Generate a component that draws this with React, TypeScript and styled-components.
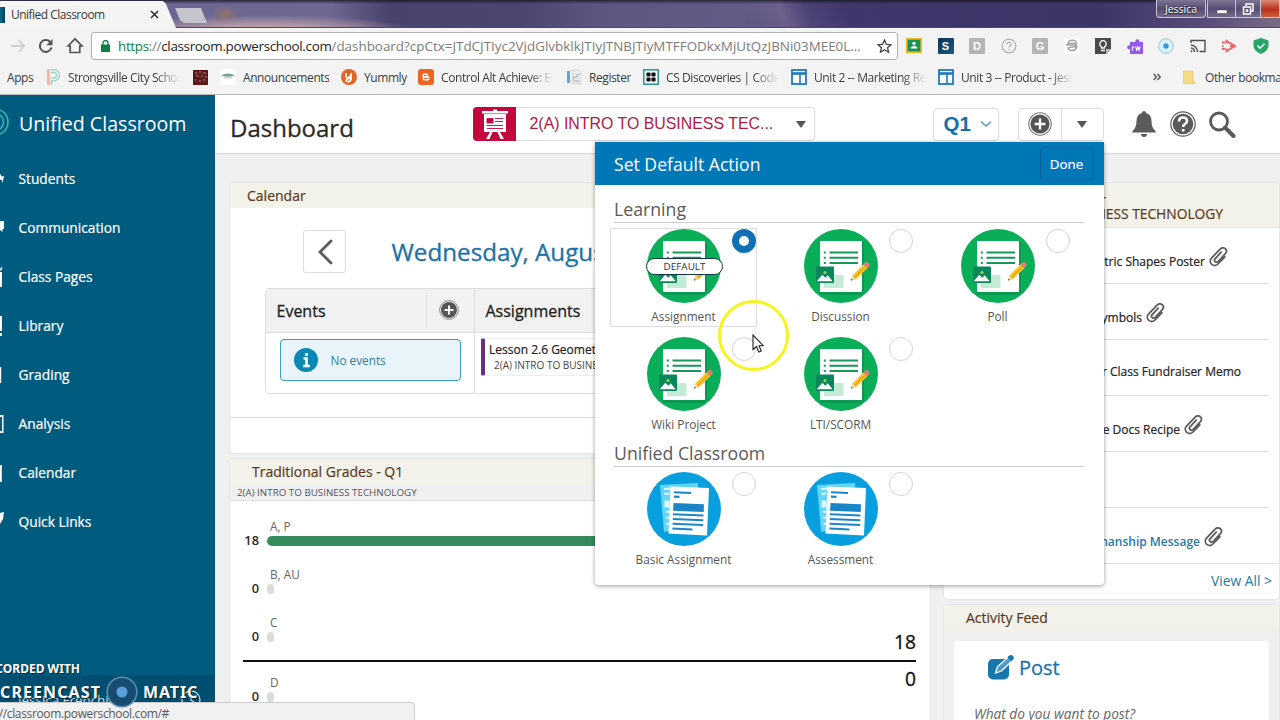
import React from 'react';
import styled, { createGlobalStyle, css } from 'styled-components';

const Global = createGlobalStyle`
  *, *::before, *::after { box-sizing: border-box; }
  html, body { margin: 0; padding: 0; overflow: hidden; }
  body { font-family: 'Open Sans', 'Noto Sans', sans-serif; color: #222; }
  svg { display: block; flex: none; }
`;

const medium = css`
  -webkit-text-stroke: 0.3px currentColor;
`;

const Window = styled.div`
  position: relative;
  width: 1280px;
  height: 720px;
  overflow: hidden;
  display: flex;
  flex-direction: column;
  background: #fff;
`;

/* ---------- browser chrome ---------- */

const TitleBar = styled.div`
  height: 28px;
  flex: none;
  display: flex;
  background:
    linear-gradient(180deg, rgba(20, 18, 30, 0.75) 0, rgba(20, 18, 30, 0) 4px),
    radial-gradient(ellipse 14px 9px at 226px 14px, rgba(160, 120, 90, 0.7), transparent),
    radial-gradient(ellipse 150px 15px at 265px 30px, #b79ca4 30%, rgba(183, 156, 164, 0) 100%),
    linear-gradient(65deg, transparent 58%, rgba(122, 109, 149, 0.6) 61%, #4d4377 63%, #40366b 66%, transparent 70%),
    linear-gradient(90deg, #6b6690 160px, #6e6892 330px, #47436c 390px, #4a4670 520px, #5d5780 600px, #625c86 740px, #3f376c 850px, #3c3567 1100px, #564b78 1200px, #786a86 1280px);
  border-bottom: 1px solid #4d486a;
`;
const Tab = styled.div`
  width: 178px;
  height: 28px;
  padding-top: 1px;
  display: flex;
  align-items: center;
  background: #f4f4f4;
  clip-path: polygon(0 1px, 163px 1px, 166px 4px, 176px 28px, 0 28px);
`;
const TabFavicon = styled.div`
  width: 5px;
  height: 16px;
  margin-right: 6px;
  background: linear-gradient(90deg, #0a6d86, #07405a);
`;
const TabTitle = styled.div`
  width: 139px;
  font-size: 12px;
  letter-spacing: -0.52px;
  color: #3a3a3a;
`;
const NewTab = styled.div`
  width: 34px;
  height: 15px;
  margin: 8px 0 0 -3px;
  background: #c5c3cd;
  clip-path: polygon(0 0, 26px 0, 32px 15px, 9px 15px, 5px 12px);
`;
const WindowControls = styled.div`
  margin-left: auto;
  display: flex;
  height: 18px;
`;
const GlassButton = styled.div<{ $w: number; $close?: boolean }>`
  width: ${p => p.$w}px;
  height: 18px;
  display: flex;
  align-items: center;
  justify-content: center;
  border: 1px solid #c9c5d6;
  border-top: 0;
  border-radius: 0 0 ${p => (p.$w > 40 ? '4px 4px' : '0 0')};
  background: ${p => (p.$close ? 'linear-gradient(#d98972, #b8321c 55%, #cf5a3a)' : 'linear-gradient(#7e7693, #574d73 50%, #746b8c)')};
  color: #fff;
  font-size: 10.5px;
  text-shadow: 0 0 2px #222, 0 1px 1px #222;
  & + & { margin-left: -1px; }
`;
const Gap = styled.div<{ $w: number }>`
  width: ${p => p.$w}px;
  flex: none;
`;

const Toolbar = styled.div`
  height: 35px;
  flex: none;
  display: flex;
  align-items: center;
  background: #f3f3f3;
`;
const NavIcons = styled.div`
  width: 91px;
  display: flex;
  align-items: center;
  padding-left: 11px;
  gap: 12px;
`;
const AddressBar = styled.div`
  width: 807px;
  height: 28px;
  border: 1px solid #b0b0b2;
  border-radius: 3px;
  background: #fff;
  display: flex;
  align-items: center;
  padding: 0 5px 0 9px;
`;
const Url = styled.div`
  width: 776px;
  margin-left: 8px;
  font-size: 13.4px;
  white-space: nowrap;
  color: #7c7c7c;
  letter-spacing: -0.31px;
`;
const UrlSecure = styled.span`color: #0b8043;`;
const UrlHost = styled.span`color: #222;`;
const UrlPath = styled.span`letter-spacing: 0.01px;`;
const Extensions = styled.div`
  display: flex;
  align-items: center;
  margin-left: 8px;
  gap: 15.5px;
`;
const ExtTile = styled.div<{ $bg: string }>`
  width: 16px;
  height: 16px;
  display: flex;
  align-items: center;
  justify-content: center;
  background: ${p => p.$bg};
  border-radius: 1px;
  color: #fff;
  font: 700 11px 'Liberation Sans', sans-serif;
`;

const Bookmarks = styled.div`
  height: 32px;
  flex: none;
  display: flex;
  align-items: center;
  padding: 0 0 3px 7px;
  background: #f3f3f3;
  border-bottom: 1px solid #b6b6b8;
  font-size: 12px;
  letter-spacing: -0.42px;
  color: #3c3c3c;
  white-space: nowrap;
`;
const Bookmark = styled.div<{ $w: number }>`
  width: ${p => p.$w}px;
  flex: none;
  display: flex;
  align-items: center;
  gap: 7px;
`;
const BookmarkText = styled.span<{ $fade?: boolean }>`
  width: ${p => (p.$fade ? '112px' : 'auto')};
  overflow: hidden;
  ${p => p.$fade && css`
    mask-image: linear-gradient(90deg, #000 88px, transparent 112px);
  `}
`;
const Divider = styled.div`
  width: 1px;
  height: 16px;
  margin: 0 12px 0 10px;
  background: #bbb;
`;

/* ---------- application ---------- */

const AppArea = styled.div`
  flex: 1;
  min-height: 0;
  display: flex;
`;
const Sidebar = styled.nav`
  width: 215px;
  flex: none;
  display: flex;
  flex-direction: column;
  background: #005b7f;
  color: #fff;
`;
const Brand = styled.div`
  height: 59px;
  display: flex;
  align-items: center;
  gap: 9px;
  padding-bottom: 2px;
  font-size: 19.6px;
`;
const NavItem = styled.div`
  height: 49px;
  display: flex;
  align-items: center;
  gap: 13.5px;
  font-size: 13.75px;
  -webkit-text-stroke: 0.2px currentColor;
`;
const SidebarUser = styled.div`
  margin-top: auto;
  height: 45px;
  padding: 15px 14px 0 18px;
  display: flex;
  justify-content: space-between;
  background: #004f70;
  font-size: 13.4px;
  line-height: 20px;
  color: #c8dbe4;
`;

const Main = styled.main`
  flex: 1;
  min-width: 0;
  display: flex;
  flex-direction: column;
  background: #f0f0f0;
`;
const PageHeader = styled.header`
  height: 59px;
  flex: none;
  display: flex;
  align-items: center;
  padding-left: 15px;
  background: #fff;
  border-bottom: 1px solid #d8d8d8;
`;
const PageTitle = styled.div`
  width: 243px;
  padding-top: 6px;
  font-size: 24px;
  ${medium}
  color: #2a2a2a;
`;
const ClassSelect = styled.div`
  width: 342px;
  height: 34px;
  display: flex;
  align-items: center;
  border: 1px solid #ddd;
  border-left: 0;
  border-radius: 4px;
  font: 15.9px 'Liberation Sans', sans-serif;
  color: #b0184a;
`;
const ClassBadge = styled.div`
  width: 43px;
  height: 34px;
  border-radius: 4px 0 0 4px;
  background: #c3063c;
  display: flex;
  justify-content: center;
  padding-top: 2px;
`;
const ClassName = styled.div`
  width: 267px;
  padding-left: 13.5px;
  white-space: nowrap;
`;
const Caret = styled.div<{ $w: number }>`
  width: 0;
  height: 0;
  margin-left: ${p => p.$w}px;
  border: 5.5px solid transparent;
  border-top: 7px solid #555;
  border-bottom: 0;
`;
const TermSelect = styled.div`
  width: 66px;
  height: 33px;
  margin-left: 118px;
  display: flex;
  align-items: center;
  gap: 9px;
  padding-left: 9.5px;
  border: 1px solid #ddd;
  border-radius: 4px;
  font: 700 20.5px 'Liberation Sans', sans-serif;
  color: #146fa8;
`;
const ActionGroup = styled.div`
  width: 86px;
  height: 33px;
  margin: 0 28px 0 19px;
  display: flex;
  align-items: center;
  border: 1px solid #ddd;
  border-radius: 4px;
`;
const ActionHalf = styled.div`
  width: 43px;
  height: 31px;
  display: flex;
  align-items: center;
  justify-content: center;
  & + & { border-left: 1px solid #ddd; }
`;
const HeaderIcons = styled.div`
  display: flex;
  align-items: center;
  gap: 13.5px;
`;

const Columns = styled.div`
  flex: 1;
  min-height: 0;
  display: flex;
  gap: 14px;
  padding: 29px 0 0 15px;
`;
const Column = styled.div<{ $w: number }>`
  width: ${p => p.$w}px;
  flex: none;
  display: flex;
  flex-direction: column;
  gap: 6px;
`;
const Card = styled.section<{ $h: number }>`
  height: ${p => p.$h}px;
  flex: none;
  display: flex;
  flex-direction: column;
  background: #fff;
  border-radius: 2px 2px 4px 4px;
  box-shadow: 0 0 2px rgba(0, 0, 0, 0.16);
  overflow: hidden;
`;
const CardHeader = styled.div<{ $h: number; $pad: number }>`
  height: ${p => p.$h}px;
  flex: none;
  display: flex;
  align-items: center;
  padding: 0 0 1px ${p => p.$pad}px;
  background: #f2f1ea;
  font-size: 14px;
  -webkit-text-stroke: 0.2px currentColor;
  color: #5b3a1c;
`;
const DayNav = styled.div`
  height: 80px;
  flex: none;
  display: flex;
  align-items: center;
  padding: 7px 0 0 73px;
  gap: 45.5px;
`;
const PrevButton = styled.div`
  width: 43px;
  height: 43px;
  display: flex;
  align-items: center;
  justify-content: center;
  border: 1px solid #ddd;
  border-radius: 3px;
`;
const DayTitle = styled.div`
  font-size: 24.2px;
  ${medium}
  color: #1c72a6;
`;
const Agenda = styled.div`
  margin: 0 35px;
  height: 106px;
  flex: none;
  display: grid;
  grid-template-columns: 209px 1fr;
  grid-template-rows: 44px 1fr;
  border: 1px solid #ddd;
  border-radius: 4px;
`;
const AgendaHead = styled.div`
  display: flex;
  align-items: center;
  justify-content: space-between;
  padding-left: 10.5px;
  background: #f1f1f1;
  border-bottom: 1px solid #ddd;
  border-right: 1px solid #ddd;
  font-size: 16px;
  ${medium}
  color: #222;
`;
const AddCell = styled.div`
  width: 48px;
  height: 34px;
  padding: 0 0 2px 12px;
  display: flex;
  align-items: center;
  border-left: 1px solid #ddd;
`;
const AgendaCell = styled.div`
  padding: 5px 5px 0 14px;
  border-right: 1px solid #ddd;
  & + & { padding-left: 6px; }
`;
const InfoBox = styled.div`
  width: 181px;
  height: 42px;
  margin-top: 1px;
  display: flex;
  align-items: center;
  gap: 13px;
  padding: 0 0 1px 12.5px;
  border: 1px solid #3b9fbd;
  border-radius: 4px;
  background: #e8f4fa;
  font-size: 11.8px;
  color: #2f7c98;
`;
const Lesson = styled.div`
  height: 38px;
  padding: 2px 0 0 4px;
  border: 1px solid #eee;
  border-left: 4px solid #6a2d84;
  border-radius: 2px;
  white-space: nowrap;
  overflow: hidden;
`;
const LessonTitle = styled.div`
  font-size: 12px;
  line-height: 17px;
  -webkit-text-stroke: 0.2px currentColor;
  color: #222;
`;
const LessonClass = styled.div`
  padding-left: 5px;
  font-size: 10px;
  line-height: 15px;
  color: #444;
`;
const CalendarFooter = styled.div`
  margin-top: 23px;
  border-top: 1px solid #ddd;
`;

const GradesSubtitle = styled.div`
  height: 16px;
  flex: none;
  padding-left: 7px;
  background: #f0f0f0;
  border-bottom: 1px solid #ddd;
  font-size: 9.8px;
  line-height: 15px;
  color: #555;
`;
const GradeList = styled.div`
  display: flex;
  flex-direction: column;
  padding: 16px 14px 0 13px;
`;
const GradeRow = styled.div`
  height: 48px;
  display: grid;
  grid-template-columns: 17px 1fr;
  grid-template-rows: 17px 12px;
  column-gap: 7px;
  align-items: center;
`;
const GradeLabel = styled.div`
  grid-column: 2;
  padding-left: 3px;
  font-size: 11.8px;
  color: #666;
`;
const GradeCount = styled.div`
  font-size: 12.8px;
  font-weight: 600;
  line-height: 12px;
  text-align: right;
  padding: 0 1px 1px 0;
  color: #2b2b2b;
`;
const GradeBar = styled.div<{ $full?: boolean }>`
  width: ${p => (p.$full ? '100%' : '7px')};
  height: 10px;
  margin-top: 1px;
  border-radius: ${p => (p.$full ? '5px' : '3.5px')};
  background: ${p => (p.$full ? '#358b5b' : '#dcdcdc')};
`;
const GradeTotal = styled.div<{ $first?: boolean }>`
  height: ${p => (p.$first ? 33 : 38)}px;
  margin-top: ${p => (p.$first ? -32 : 0)}px;
  margin-bottom: ${p => (p.$first ? 0 : -38)}px;
  line-height: ${p => (p.$first ? 26 : 34)}px;
  border-bottom: ${p => (p.$first ? '2px solid #111' : '0')};
  font-size: 19.2px;
  ${medium}
  text-align: right;
  color: #111;
`;
const LowerGrades = styled.div`padding-top: 11px;`;

const FeedHeading = styled.div`
  height: 45px;
  flex: none;
  background: #f2f1ea;
  border-bottom: 1px solid #e6e5de;
  font-size: 13.8px;
  line-height: 17px;
  padding: 5px 0 0 121px;
  -webkit-text-stroke: 0.2px currentColor;
  color: #5b3a1c;
  white-space: nowrap;
`;
const FeedLead = styled.div`padding-left: 7px;`;
const FeedRow = styled.div<{ $top: number; $link?: boolean }>`
  height: 56px;
  flex: none;
  margin: 0 10px;
  padding-top: ${p => p.$top}px;
  border-bottom: 1px solid #ddd;
  font-size: 12px;
  line-height: 18px;
  font-weight: ${p => (p.$link ? 600 : 400)};
  -webkit-text-stroke: ${p => (p.$link ? 0 : 0.2)}px currentColor;
  color: ${p => (p.$link ? '#2779a7' : '#222')};
  white-space: nowrap;
  &:nth-last-child(2) { margin: 0; padding-left: 10px; padding-right: 10px; }
`;
const FeedText = styled.div<{ $end: number }>`
  width: ${p => p.$end}px;
  display: flex;
  justify-content: flex-end;
  align-items: flex-end;
  gap: 4px;
`;
const ClipSlot = styled.span`
  width: 0;
  height: 18px;
  margin-top: -4px;
  overflow: visible;
  & svg { margin-top: -6px; }
`;
const ViewAll = styled.div`
  flex: 1;
  display: flex;
  align-items: center;
  justify-content: flex-end;
  padding: 0 7px 2px 0;
  font-size: 13.8px;
  color: #2779a7;
`;
const ActivityBody = styled.div`
  flex: 1;
  padding: 10px 10px 0;
  background: #efefef;
`;
const Composer = styled.div`
  height: 90px;
  padding: 12px 0 0 20px;
  background: #fff;
  border-radius: 3px;
`;
const PostLine = styled.div`
  display: flex;
  align-items: center;
  gap: 5px;
  padding-left: 14px;
  height: 28px;
  font-size: 20px;
  ${medium}
  color: #1873aa;
`;
const PostHint = styled.div`
  margin-top: 23px;
  font-size: 13.7px;
  line-height: 20px;
  font-style: italic;
  color: #666;
`;

/* ---------- default action popup ---------- */

const Popup = styled.div`
  position: absolute;
  left: 594.5px;
  top: 142px;
  width: 509px;
  height: 443px;
  background: #fff;
  border-radius: 0 0 4px 4px;
  box-shadow: 0 1px 4px rgba(0, 0, 0, 0.4);
`;
const PopupHeader = styled.div`
  height: 43px;
  display: flex;
  align-items: center;
  justify-content: space-between;
  padding: 0 10px 0 19.5px;
  background: #0077b7;
  color: #fff;
  font-size: 17.6px;
`;
const DoneButton = styled.div`
  width: 54px;
  height: 33px;
  display: flex;
  align-items: center;
  justify-content: center;
  border: 1px solid #005f96;
  border-radius: 3px;
  font-size: 13.3px;
  -webkit-text-stroke: 0.2px currentColor;
`;
const GroupTitle = styled.div<{ $mt: number }>`
  height: 26px;
  margin: ${p => p.$mt}px 19.5px 0;
  border-bottom: 1px solid #ccc;
  font-size: 17.7px;
  line-height: 24px;
  color: #5a5a5a;
`;
const TileGrid = styled.div<{ $top: number }>`
  display: grid;
  grid-template-columns: repeat(3, 157px);
  row-gap: 9px;
  padding: ${p => p.$top}px 0 0 15.5px;
`;
const Tile = styled.div<{ $selected?: boolean }>`
  position: relative;
  width: 147px;
  height: 99px;
  display: flex;
  flex-direction: column;
  align-items: center;
  border: 1px solid ${p => (p.$selected ? '#ddd' : 'transparent')};
`;
const TileLabel = styled.div`
  margin-top: 5px;
  font-size: 11.8px;
  line-height: 16px;
  color: #555;
`;
const Radio = styled.div<{ $on?: boolean }>`
  position: absolute;
  right: 0;
  top: 0;
  width: 24px;
  height: 24px;
  border-radius: 50%;
  background: #fff;
  border: ${p => (p.$on ? '7px solid #0f70b4' : '1px solid #d4d4d4')};
`;
const DefaultPill = styled.div`
  position: absolute;
  left: 35px;
  top: 29px;
  width: 77px;
  height: 17px;
  border: 1px solid #12334a;
  border-radius: 9px;
  background: #fff;
  font-size: 9.8px;
  line-height: 15px;
  letter-spacing: 0.1px;
  text-align: center;
  color: #1e3445;
`;

/* ---------- overlays ---------- */

const CursorHalo = styled.div`
  position: absolute;
  left: 718px;
  top: 300px;
  width: 71px;
  height: 71px;
  border: 3px solid #f3f51c;
  border-radius: 50%;
`;
const CursorArrow = styled.div`
  position: absolute;
  left: 752px;
  top: 334px;
`;
const Watermark = styled.div`
  position: absolute;
  left: 0;
  top: 661px;
  width: 210px;
  color: #fff;
  font: 700 12px/16px 'Noto Sans', sans-serif;
  text-shadow: 1px 1px 1px #123;
`;
const WatermarkLogo = styled.div`
  display: flex;
  align-items: center;
  height: 30px;
  gap: 5px;
  font-size: 16px;
`;
const CutWord = styled.span<{ $w: number; $ls: number }>`
  width: ${p => p.$w}px;
  display: flex;
  justify-content: flex-end;
  letter-spacing: ${p => p.$ls}px;
`;
const WatermarkTail = styled.span`letter-spacing: 0.9px;`;
const StatusBar = styled.div`
  position: absolute;
  left: 0;
  bottom: 0;
  width: 415px;
  height: 18px;
  border: 1px solid #ccc;
  border-left: 0;
  border-bottom: 0;
  border-radius: 0 4px 0 0;
  background: #f1f1f1;
  color: #5a5a5a;
  font-size: 12px;
  line-height: 21px;
`;
const StatusText = styled.div`
  width: 169px;
  display: flex;
  justify-content: flex-end;
  letter-spacing: -0.35px;
  white-space: nowrap;
`;

/* ---------- drawings ---------- */

const PlusCircle = ({ size }: { size: number }) => (
  <svg width={size} height={size} viewBox="0 0 24 24">
    <circle cx="12" cy="12" r="11.2" fill="#fff" stroke="#777" strokeWidth="1.1" />
    <circle cx="12" cy="12" r="9.6" fill="#555" />
    <path d="M12 6.6v10.8M6.6 12h10.8" stroke="#fff" strokeWidth="2.3" />
  </svg>
);

const PaperClip = () => (
  <svg width="19" height="21" viewBox="0 0 19 21" fill="none" stroke="#5c5c5c" strokeWidth="1.8" strokeLinecap="round">
    <path d="M15.800 9.800 9 17a4.400 4.400 0 0 1-6.600 0 4.300 4.300 0 0 1 .1-5.900l8.600-9a3.700 3.700 0 0 1 5.700.2 3.500 3.500 0 0 1-.4 4.400l-7.400 7.800a2 2 0 0 1-3-2.700l6.200-6.600" />
  </svg>
);

const GreenTileArt = () => (
  <svg width="74" height="74" viewBox="0 0 74 74">
    <circle cx="37" cy="37" r="37" fill="#0bae58" />
    <path d="M58 12l2 2v49l-3 3H17l-2-3z" fill="#079a50" />
    <path d="M16 12h42v51H16z" fill="#fff" />
    <path d="M25.5 23.5h28.5M25.5 28.8h28.5M25.5 34h28.5" stroke="#16985a" strokeWidth="2.1" />
    <path d="M19.8 23.5h2M19.8 28.8h2M19.8 34h2" stroke="#16985a" strokeWidth="2.1" />
    <path d="M20 46h19.500v13H20z" fill="#c5ebd7" />
    <rect x="12" y="37.500" width="18" height="16.500" rx="1" fill="#08875a" />
    <path d="M12.800 52.200l5.500-6.400 3 3 2.400-2.600 5 6z" fill="#fff" />
    <circle cx="21" cy="43.500" r="1.600" fill="#a5cf4c" />
    <path d="M47 51.500l1.300-5L59.500 35.200l4 3.800-11.500 11.200z" fill="#f7c62b" />
    <path d="M50.500 48.800L61.700 37.200" stroke="#e5a51a" strokeWidth="1.400" />
    <path d="M47 51.500l1.300-5 3.700 3.700z" fill="#f1d8b4" />
    <path d="M47 51.500l.500-1.800 1.400 1.300z" fill="#444" />
    <path d="M59.500 35.200l2-2q2.200-.8 3.500 1.200t.500 2.500l-2 2.100z" fill="#dd7f78" />
  </svg>
);

const BlueTileArt = () => (
  <svg width="74" height="74" viewBox="0 0 74 74">
    <circle cx="37" cy="37" r="37" fill="#079fdd" />
    <path d="M13 13l38-2 2 42-36 7z" fill="#63d5fb" />
    <path d="M17 17l7-.6M17.200 22l5-.4M19 40l4-.4M19 46l4-.4M19.500 52l4-.6" stroke="#dff6ff" strokeWidth="2" />
    <path d="M17.500 28.500h5v7h-5z" fill="#dff6ff" />
    <path d="M23.500 14.500l38.500 1.500-2 47.500-38.500-2z" fill="#fff" />
    <path d="M27 20.200l17 .8M27 24.600l5.500.3" stroke="#1a86c8" strokeWidth="2.100" />
    <path d="M26.500 31l30.500 1.200-.3 7.800L26 38.700z" fill="#1a86c8" />
    <path d="M26 42.300l30.500 1.300M25.800 47l30.500 1.300M25.600 51.800l30.500 1.300M25.400 56.600l20 .9" stroke="#1a86c8" strokeWidth="2" />
  </svg>
);

const LayoutGlyph = () => (
  <svg width="16" height="16" viewBox="0 0 16 16" fill="#fff" stroke="#1f78b8">
    <rect x="1" y="1" width="14" height="14" strokeWidth="1.800" />
    <path d="M1 4.500h14" strokeWidth="2.600" />
    <path d="M9 5v10" strokeWidth="1.600" />
  </svg>
);

const navItems = [
  { label: 'Students', art: 'M0 4.500l1.500 3L4 7 2.500 14 1.500 10.500 0 11z' },
  { label: 'Communication', art: 'M0 3h4v8H2.500v3L0 12z' },
  { label: 'Class Pages', art: 'M0 3l1-3 1.500 1L1 4zM0 5h2v15H0z' },
  { label: 'Library', art: 'M0 0h2v15H0zM0 17h1.800v3H0z' },
  { label: 'Grading', art: 'M0 2h1.200v16H0z' },
  { label: 'Analysis', art: 'M0 1h3.500v18H0v-2h2V3H0z' },
  { label: 'Calendar', art: 'M0 2h1.800v17H0z' },
  { label: 'Quick Links', art: 'M0 1l4-1-1 7-3 5z' },
];

const learning = ['Assignment', 'Discussion', 'Poll', 'Wiki Project', 'LTI/SCORM'];
const unified = ['Basic Assignment', 'Assessment'];

const feed = [
  { text: 'Geometric Shapes Poster', end: 255, top: 25, clip: true },
  { text: 'Symbols', end: 192, top: 25, clip: true },
  { text: 'for Class Fundraiser Memo', end: 287, top: 23, clip: false },
  { text: 'Google Docs Recipe', end: 230, top: 25, clip: true },
  { text: '', end: 226, top: 24, clip: false },
  { text: 'Sportsmanship Message', end: 250, top: 25, clip: true, link: true },
];

const Browser = () => (
  <>
    <TitleBar>
      <Tab>
        <TabFavicon />
        <TabTitle>Unified Classroom</TabTitle>
        <svg width="9" height="9" viewBox="0 0 9 9" stroke="#333" strokeWidth="1.700"><path d="M1 1l7 7M8 1L1 8" /></svg>
      </Tab>
      <NewTab />
      <WindowControls>
        <GlassButton $w={50}>Jessica</GlassButton>
        <Gap $w={1} />
        <GlassButton $w={29}>
          <svg width="12" height="12" viewBox="0 0 12 12"><path d="M1 7h10v3.500H1z" fill="#fff" stroke="#444" strokeWidth=".5" /></svg>
        </GlassButton>
        <GlassButton $w={26}>
          <svg width="12" height="12" viewBox="0 0 12 12" fill="none" stroke="#fff" strokeWidth="1.500"><path d="M4 3V1h7v7H9M1.500 4h7v7h-7zM4.500 7h1v1h-1z" /></svg>
        </GlassButton>
        <GlassButton $w={20} $close />
      </WindowControls>
    </TitleBar>
    <Toolbar>
      <NavIcons>
        <svg width="15" height="14" viewBox="0 0 15 14" fill="none" stroke="#d2d2d2" strokeWidth="1.800"><path d="M0 7h13M7.500 1.200L13.300 7l-5.800 5.800" /></svg>
        <svg width="16" height="16" viewBox="0 0 16 16"><path d="M13.500 9.500A5.900 5.900 0 1 1 12 3.800" fill="none" stroke="#555" strokeWidth="2" /><path d="M14.500 1v6.200H8.300z" fill="#555" /></svg>
        <svg width="18" height="17" viewBox="0 0 18 17" fill="none" stroke="#555" strokeWidth="1.700"><path d="M2 9L9 1.800 16 9h-2.200v6.500H4.200V9z" /></svg>
      </NavIcons>
      <AddressBar>
        <svg width="9" height="12" viewBox="0 0 9 12"><path d="M0 4.500h9V12H0z" fill="#0b8043" /><path d="M2 5V3a2.500 2.500 0 0 1 5 0v2" fill="none" stroke="#0b8043" strokeWidth="1.300" /></svg>
        <Url>
          <UrlSecure>https</UrlSecure>://<UrlHost>classroom.powerschool.com</UrlHost>
          <UrlPath>/dashboard?cpCtx=JTdCJTIyc2VjdGlvbklkJTIyJTNBJTIyMTFFODkxMjUtQzJBNi03MEE0L...</UrlPath>
        </Url>
        <svg width="15" height="14" viewBox="0 0 15 14" fill="none" stroke="#444" strokeWidth="1.300"><path d="M7.500 1l1.900 4.300 4.600.4-3.500 3 1.100 4.500-4.100-2.400-4.100 2.400 1.100-4.500-3.500-3 4.600-.4z" /></svg>
      </AddressBar>
      <Extensions>
        <svg width="16" height="15" viewBox="0 0 16 15"><path d="M0 0h16v15H0z" fill="#efb323" /><path d="M1.700 1.700h12.600v11.600H1.700z" fill="#159457" /><circle cx="8" cy="5.500" r="1.700" fill="#fff" /><path d="M4.500 10.500q0-2.500 3.500-2.500t3.500 2.500z" fill="#fff" /></svg>
        <ExtTile $bg="linear-gradient(135deg, #14324f, #0f5a86)">S</ExtTile>
        <ExtTile $bg="#b5b5b5">D</ExtTile>
        <svg width="16" height="16" viewBox="0 0 16 16" fill="none" stroke="#b0b0b0" strokeWidth="1.200"><circle cx="8" cy="8" r="6.800" /><path d="M6 6.300a2 2 0 1 1 2.700 1.900q-.7.300-.7 1.300M8 11v1.200" /></svg>
        <ExtTile $bg="#b5b5b5">G</ExtTile>
        <svg width="16" height="16" viewBox="0 0 16 16" fill="none"><path d="M0 0h16v16H0z" fill="#fff" /><path d="M12.500 5C12 1 5 1 4 5.500q0 2 4.500 1.500t4 2.500C11 14 5 13 4 10M2 7.500q6-4 11-1M3.500 10q5-1.500 10-1" stroke="#999" strokeWidth="1.300" /></svg>
        <svg width="16" height="16" viewBox="0 0 16 16"><path d="M0 0h16v11l-5 5H0z" fill="#4a4a4a" /><path d="M16 11h-5v5z" fill="#bbb" /><path d="M6 12.500h4M6.500 10V8.700a3.200 3.200 0 1 1 3 0V10z" fill="none" stroke="#fff" strokeWidth="1.300" /></svg>
        <svg width="16" height="16" viewBox="0 0 16 16"><path d="M3 4h5.500a2 2 0 1 1 3.600 0H16v12H3v-5a2 2 0 1 1 0-3.600z" fill="#9457e6" /><path d="M5.500 12.500V9h2M8.700 8.700l1 3.300 1.200-3 1.200 3 1-3.300" fill="none" stroke="#fff" strokeWidth="1.200" /></svg>
        <svg width="16" height="16" viewBox="0 0 16 16"><circle cx="8" cy="8" r="7.300" fill="#dff0f7" stroke="#8fc7de" /><circle cx="8" cy="8" r="2.700" fill="#2d9fd2" /></svg>
        <svg width="16" height="14" viewBox="0 0 16 14" fill="none" stroke="#505050" strokeWidth="1.400"><path d="M1 4V1.500h14v11H9.500M1 6a7 7 0 0 1 6.500 7M1 9a4 4 0 0 1 3.500 4M1 11.500l1 1.500" /></svg>
        <svg width="16" height="14" viewBox="0 0 16 14" fill="none" stroke="#ea6767" strokeWidth="1.900"><path d="M5.500 4.500V2L14 7l-8.500 5V9.500M1 3.500h3M1 10h3M1 7h1.500M9 7h5" /></svg>
        <svg width="16" height="16" viewBox="0 0 16 16"><path d="M8 0l7.500 2.500V8q-1 5.500-7.500 8Q1.500 13.500.5 8V2.500z" fill="#27a567" /><path d="M4.500 7.500l2.500 2.700 4.500-4.500" fill="none" stroke="#fff" strokeWidth="1.600" /></svg>
      </Extensions>
    </Toolbar>
    <Bookmarks>
      <Bookmark $w={39}>Apps</Bookmark>
      <Bookmark $w={147}>
        <svg width="15" height="16" viewBox="0 0 15 16" fill="none"><path d="M1 0h3v16H1z" fill="#f2b8a0" /><path d="M4.500.8H8a5.500 5.500 0 0 1 0 11H5.500V16M5 3.500h2.700a2.800 2.800 0 0 1 0 5.600H5" stroke="#8fcfb8" strokeWidth="1.200" /></svg>
        <BookmarkText $fade>Strongsville City Schools</BookmarkText>
      </Bookmark>
      <Bookmark $w={27}>
        <svg width="15" height="15" viewBox="0 0 15 15"><path d="M0 0h15v15H0z" fill="#5b1a1c" /><path d="M2 3h2M6 2h2M10 3h3M3 6h3M8 6h2M12 7h2M2 10h1M6 11h2M10 10h2" stroke="#b98a80" /></svg>
      </Bookmark>
      <Bookmark $w={121}>
        <svg width="16" height="16" viewBox="0 0 16 16"><path d="M0 0h16v16H0z" fill="#fff" /><path d="M1 6.500q7-4 14 0-7 2.500-14 0z" fill="#76a594" /><path d="M4 9h8" stroke="#bbb" /></svg>
        <BookmarkText>Announcements</BookmarkText>
      </Bookmark>
      <Bookmark $w={77}>
        <svg width="16" height="16" viewBox="0 0 16 16"><circle cx="8" cy="8" r="8" fill="#e26324" /><path d="M5 4v3q0 2 2.500 1.500T10 4v6q-.5 3-3.500 2.500T7 9.500l4-.5" fill="none" stroke="#fff" strokeWidth="1.600" /></svg>
        <BookmarkText>Yummly</BookmarkText>
      </Bookmark>
      <Bookmark $w={148}>
        <svg width="16" height="16" viewBox="0 0 16 16"><rect width="16" height="16" rx="3" fill="#ee6423" /><path d="M4 5.500A2 2 0 0 1 6 4h2.500a2 2 0 0 1 2 2v1H12v3a2 2 0 0 1-2 2H6a2 2 0 0 1-2-2zM6 6.700h2.500M6 9.500h4" fill="#fff" stroke="#ee6423" strokeWidth="1.200" /></svg>
        <BookmarkText $fade>Control Alt Achieve: Ed</BookmarkText>
      </Bookmark>
      <Bookmark $w={77}>
        <svg width="16" height="16" viewBox="0 0 16 16"><path d="M1 2h3v12H1z" fill="#5da5cf" /><path d="M6 1h7l2 2v12H6z" fill="#e6e8ea" stroke="#ccc" strokeWidth=".6" /><path d="M7.500 11V8H11V5.500h2.500M7.500 12h6" stroke="#a9b1ba" fill="none" /></svg>
        <BookmarkText>Register</BookmarkText>
      </Bookmark>
      <Bookmark $w={148}>
        <svg width="16" height="16" viewBox="0 0 16 16"><rect x=".8" y=".8" width="14.400" height="14.400" fill="#fff" stroke="#2a9aa4" strokeWidth="1.600" /><rect x="3.400" y="3.400" width="4.200" height="4.200" rx="1" fill="#111" /><rect x="8.400" y="3.400" width="4.200" height="4.200" rx="1" fill="#111" /><rect x="3.400" y="8.400" width="4.200" height="4.200" rx="1" fill="#111" /><rect x="8.400" y="8.400" width="4.200" height="4.200" rx="1" fill="#111" /></svg>
        <BookmarkText $fade>CS Discoveries | Code</BookmarkText>
      </Bookmark>
      <Bookmark $w={147}><LayoutGlyph /><BookmarkText $fade>Unit 2 -- Marketing Re</BookmarkText></Bookmark>
      <Bookmark $w={215}><LayoutGlyph /><BookmarkText $fade>Unit 3 -- Product - Jess</BookmarkText></Bookmark>
      <svg width="8" height="8" viewBox="0 0 8 8" fill="none" stroke="#555" strokeWidth="1.400"><path d="M.7 1L3.500 4 .7 7M4.500 1l2.800 3-2.800 3" /></svg>
      <Divider />
      <svg width="12" height="14" viewBox="0 0 12 14"><path d="M0 1h10v11h2v1.500H0z" fill="#f7db84" stroke="#e5c25c" strokeWidth=".7" /></svg>
      <Gap $w={10} />
      Other bookmarks
    </Bookmarks>
  </>
);

const Tiles = ({ labels, blue }: { labels: string[]; blue?: boolean }) => (
  <TileGrid $top={blue ? 4 : 5}>
    {labels.map((label, i) => {
      const on = !blue && i === 0;
      return (
        <Tile key={label} $selected={on}>
          {blue ? <BlueTileArt /> : <GreenTileArt />}
          {on && <DefaultPill>DEFAULT</DefaultPill>}
          <TileLabel>{label}</TileLabel>
          <Radio $on={on} />
        </Tile>
      );
    })}
  </TileGrid>
);

export default function App() {
  return (
    <Window>
      <Global />
      <Browser />
      <AppArea>
        <Sidebar>
          <Brand>
            <svg width="10" height="30" viewBox="0 0 10 30" fill="none" stroke="#3db8ae" strokeWidth="1.500">
              <circle cx="-5" cy="13" r="13" /><circle cx="-5" cy="13" r="8.500" />
            </svg>
            Unified Classroom
          </Brand>
          {navItems.map(n => (
            <NavItem key={n.label}>
              <svg width="5" height="20" viewBox="0 0 5 20"><path d={n.art} fill="#fff" /></svg>
              {n.label}
            </NavItem>
          ))}
          <SidebarUser>
            Jessica Frenchik
            <svg width="20" height="20" viewBox="0 0 20 20" fill="none" stroke="#c8dbe4" strokeWidth="1.300"><circle cx="10" cy="10" r="9" /><path d="M10 5v5l4 3" /></svg>
          </SidebarUser>
        </Sidebar>

        <Main>
          <PageHeader>
            <PageTitle>Dashboard</PageTitle>
            <ClassSelect>
              <ClassBadge>
                <svg width="28" height="31" viewBox="0 0 28 31">
                  <path d="M1 2h26v2.500H1zM12 .5h4V3h-4zM3 5h22v18H3zM9 23l-4 7h3.500l3-7zM19 23l4 7h-3.500l-3-7z" fill="#fff" />
                  <path d="M6 9.500h6v4.500H6zM14 9.500h8M14 12.500h8M6 16.500h16M6 19.500h16" fill="#c3063c" stroke="#c3063c" strokeWidth=".9" />
                </svg>
              </ClassBadge>
              <ClassName>2(A) INTRO TO BUSINESS TEC...</ClassName>
              <Caret $w={13} />
            </ClassSelect>
            <TermSelect>
              Q1
              <svg width="12" height="8" viewBox="0 0 12 8" fill="none" stroke="#4f9ccb" strokeWidth="1.400"><path d="M1 1.500l5 4.500 5-4.500" /></svg>
            </TermSelect>
            <ActionGroup>
              <ActionHalf><PlusCircle size={24} /></ActionHalf>
              <ActionHalf><Caret $w={0} /></ActionHalf>
            </ActionGroup>
            <HeaderIcons>
              <svg width="24" height="26" viewBox="0 0 24 26"><path d="M12 0a2 2 0 0 1 2 2q5.500 1.500 5.500 8 0 7 4 10v1.500H.5V20q4-3 4-10 0-6.500 5.500-8a2 2 0 0 1 2-2zM9 23h6a3 3 0 0 1-6 0z" fill="#5a5a5a" /></svg>
              <svg width="26" height="26" viewBox="0 0 26 26"><circle cx="13" cy="13" r="12.200" fill="#fff" stroke="#5a5a5a" strokeWidth="1.200" /><circle cx="13" cy="13" r="10.300" fill="#5a5a5a" /><path d="M9 10.500q0-4 4-4t4 3.500q0 2-2.200 3.200Q13.200 14 13.200 16M13.200 18v2.500" fill="none" stroke="#fff" strokeWidth="2.600" /></svg>
              <svg width="28" height="27" viewBox="0 0 28 27" fill="none" stroke="#5a5a5a"><circle cx="10" cy="10.500" r="8.500" strokeWidth="2.800" /><path d="M16 16.500l8.500 8.500" strokeWidth="4" strokeLinecap="round" /></svg>
            </HeaderIcons>
          </PageHeader>

          <Columns>
            <Column $w={700}>
              <Card $h={270}>
                <CardHeader $h={25} $pad={17}>Calendar</CardHeader>
                <DayNav>
                  <PrevButton>
                    <svg width="16" height="26" viewBox="0 0 16 26" fill="none" stroke="#5a5a5a" strokeWidth="2.800" strokeLinecap="round"><path d="M14 2L3 13l11 11" /></svg>
                  </PrevButton>
                  <DayTitle>Wednesday, August 23</DayTitle>
                </DayNav>
                <Agenda>
                  <AgendaHead>Events<AddCell><PlusCircle size={20} /></AddCell></AgendaHead>
                  <AgendaHead>Assignments</AgendaHead>
                  <AgendaCell>
                    <InfoBox>
                      <svg width="24" height="24" viewBox="0 0 24 24"><circle cx="12" cy="12" r="12" fill="#0b87b3" /><path d="M12.500 5v3M9.500 10.500h3v7M9 18h7" stroke="#fff" strokeWidth="2.600" fill="none" /></svg>
                      No events
                    </InfoBox>
                  </AgendaCell>
                  <AgendaCell>
                    <Lesson>
                      <LessonTitle>Lesson 2.6 Geometric Shapes Poster</LessonTitle>
                      <LessonClass>2(A) INTRO TO BUSINESS TECHNOLOGY</LessonClass>
                    </Lesson>
                  </AgendaCell>
                </Agenda>
                <CalendarFooter />
              </Card>

              <Card $h={300}>
                <CardHeader $h={26} $pad={22}>Traditional Grades - Q1</CardHeader>
                <GradesSubtitle>2(A) INTRO TO BUSINESS TECHNOLOGY</GradesSubtitle>
                <GradeList>
                  {['A, P', 'B, AU', 'C'].map((g, i) => (
                    <GradeRow key={g}>
                      <GradeLabel>{g}</GradeLabel>
                      <GradeCount>{i === 0 ? 18 : 0}</GradeCount>
                      <GradeBar $full={i === 0} />
                    </GradeRow>
                  ))}
                  <GradeTotal $first>18</GradeTotal>
                  <GradeTotal>0</GradeTotal>
                  <LowerGrades>
                    <GradeRow>
                      <GradeLabel>D</GradeLabel>
                      <GradeCount>0</GradeCount>
                      <GradeBar />
                    </GradeRow>
                  </LowerGrades>
                </GradeList>
              </Card>
            </Column>

            <Column $w={335}>
              <Card $h={416}>
                <FeedHeading><FeedLead>Due -</FeedLead>BUSINESS TECHNOLOGY</FeedHeading>
                {feed.map((f, i) => (
                  <FeedRow key={i} $top={f.top} $link={f.link}>
                    <FeedText $end={f.end}>
                      {f.text}
                      {f.clip && <ClipSlot><PaperClip /></ClipSlot>}
                    </FeedText>
                  </FeedRow>
                ))}
                <ViewAll>View All &gt;</ViewAll>
              </Card>
              <Card $h={140}>
                <CardHeader $h={26} $pad={22}>Activity Feed</CardHeader>
                <ActivityBody>
                  <Composer>
                    <PostLine>
                      <svg width="26" height="25" viewBox="0 0 26 25"><rect x="0" y="4" width="21" height="20.500" rx="5" fill="#1677ae" /><path d="M7.500 18l2-6.500L21 1.500l4 3.500-11.500 11z" fill="#4e9ccb" stroke="#fff" strokeWidth="1.300" /><path d="M21 .8q2-1.500 3.800 0t.5 3.700l-2 1.500-4-3.700z" fill="#1677ae" /></svg>
                      Post
                    </PostLine>
                    <PostHint>What do you want to post?</PostHint>
                  </Composer>
                </ActivityBody>
              </Card>
            </Column>
          </Columns>
        </Main>
      </AppArea>

      <Popup>
        <PopupHeader>
          Set Default Action
          <DoneButton>Done</DoneButton>
        </PopupHeader>
        <GroupTitle $mt={12}>Learning</GroupTitle>
        <Tiles labels={learning} />
        <GroupTitle $mt={6}>Unified Classroom</GroupTitle>
        <Tiles labels={unified} blue />
      </Popup>

      <CursorHalo />
      <CursorArrow>
        <svg width="12" height="20" viewBox="0 0 12 20"><path d="M1 1v14.500l3.500-3 2.300 5.500 2.500-1-2.300-5.300h4.200z" fill="#fff" stroke="#222" strokeWidth="1.100" /></svg>
      </CursorArrow>

      <StatusBar><StatusText>https://classroom.powerschool.com/#</StatusText></StatusBar>
      <Watermark>
        <CutWord $w={80} $ls={0}>RECORDED&nbsp;WITH</CutWord>
        <WatermarkLogo>
          <CutWord $w={101} $ls={1.1}>SCREENCAST</CutWord>
          <svg width="32" height="32" viewBox="0 0 32 32"><circle cx="16" cy="16" r="14.800" fill="#174b70" stroke="#5f8fb5" strokeWidth="1.600" /><circle cx="16" cy="16" r="5.500" fill="#5a9fdb" /></svg>
          <WatermarkTail>MATIC</WatermarkTail>
        </WatermarkLogo>
      </Watermark>
    </Window>
  );
}
